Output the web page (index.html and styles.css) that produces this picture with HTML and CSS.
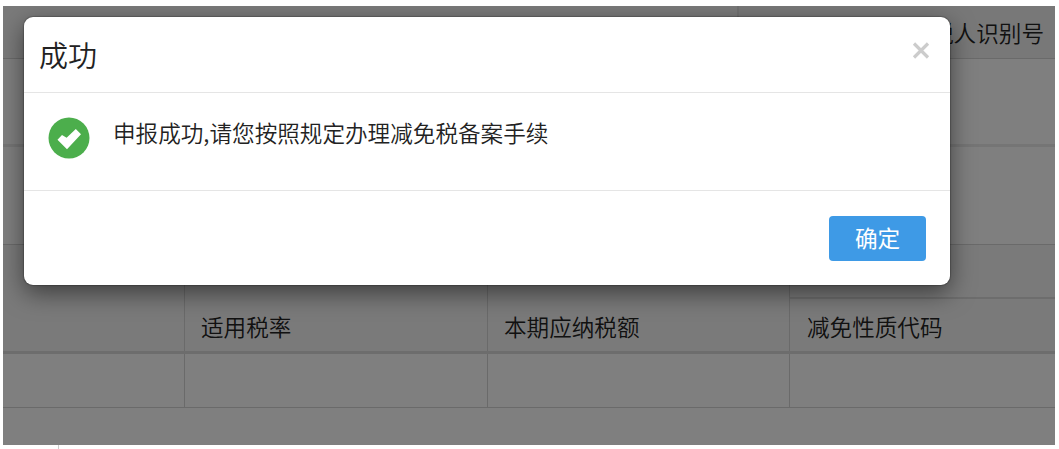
FILE: index.html
```html
<!DOCTYPE html>
<html lang="zh-CN">
<head>
    <meta charset="UTF-8">
    <meta name="viewport" content="width=device-width, initial-scale=1.0">
    <title>成功</title>
    <link rel="stylesheet" href="styles.css">
</head>
<body>
    <div class="page">
        <div class="info-row info-head">
            <div class="info-cell"></div>
            <div class="info-cell info-label">纳税人识别号</div>
        </div>
        <div class="info-row info-value"></div>
        <div class="info-row info-extra"></div>

        <div class="tax-head">
            <div class="tax-cell"></div>
            <div class="tax-cell">适用税率</div>
            <div class="tax-cell">本期应纳税额</div>
            <div class="tax-group">
                <div class="group-title"></div>
                <div class="group-name">减免性质代码</div>
            </div>
        </div>
        <div class="tax-row">
            <div class="tax-cell"></div>
            <div class="tax-cell"></div>
            <div class="tax-cell"></div>
            <div class="tax-cell"></div>
        </div>

        <div class="modal-backdrop">
            <div class="modal">
                <div class="modal-header">
                    <h4 class="modal-title">成功</h4>
                    <button type="button" class="close" aria-label="关闭">
                        <svg width="18" height="18" viewBox="0 0 18 18">
                            <path d="M2 2.5L16 16.5M16 2.5L2 16.5" stroke="#cccccc" stroke-width="3.2" fill="none"/>
                        </svg>
                    </button>
                </div>
                <div class="modal-body">
                    <svg class="icon-ok" width="42" height="42" viewBox="0 0 42 42">
                        <circle cx="21" cy="21" r="20.5" fill="#4cae4c"/>
                        <path d="M9.5 22.7L14 18L18.6 20.8L27.8 12L33 17.2L19 32.2Z" fill="#ffffff"/>
                    </svg>
                    <p class="message">申报成功,请您按照规定办理减免税备案手续</p>
                </div>
                <div class="modal-footer">
                    <button type="button" class="btn-ok">确定</button>
                </div>
            </div>
        </div>
    </div>
    <div class="page-bottom"></div>
</body>
</html>
```

FILE: styles.css
```css
* {
    box-sizing: border-box;
}
body {
    margin: 0;
    padding: 6px 4px 0 3px;
    background-color: #ffffff;
    color: #222222;
    font-family: "Noto Sans CJK SC", sans-serif;
    font-size: 22.6px;
    font-weight: 350;
    line-height: 30px;
    overflow: hidden;
}
.page {
    position: relative;
    height: 439px;
    overflow: hidden;
}
.info-row {
    border-bottom: 1px solid #d5d5d5;
}
.info-head {
    display: grid;
    grid-template-columns: 734px 1fr;
    height: 53px;
    background-color: #f5f5f5;
}
.info-label {
    padding: 12px 11px 0 0;
    border-left: 2px solid #e2e2e2;
    background-color: #f0f0f0;
    text-align: right;
}
.info-value {
    height: 88px;
    border-bottom: 3px solid #eaeaea;
}
.info-extra {
    height: 98px;
}
.tax-head,
.tax-row {
    display: grid;
    grid-template-columns: 181px 303px 302px 1fr;
}
.tax-head {
    height: 109px;
    background-color: #f5f5f5;
    border-bottom: 3px solid #dadada;
}
.tax-cell {
    padding-left: 16px;
    border-left: 1px solid #d5d5d5;
}
.tax-cell:first-child {
    border-left: none;
}
.tax-head .tax-cell {
    padding-top: 67px;
}
.tax-row {
    height: 54px;
    border-bottom: 1px solid #d5d5d5;
}
.tax-group {
    border-left: 1px solid #d5d5d5;
}
.group-title {
    height: 54px;
    border-bottom: 2px solid #dadada;
}
.group-name {
    padding: 13px 0 0 17px;
}
.modal-backdrop {
    position: absolute;
    inset: 0;
    padding: 11px 21px;
    background-color: rgba(0, 0, 0, 0.5);
}
.modal {
    width: 926px;
    height: 268px;
    background-color: #ffffff;
    border-radius: 9px;
    box-shadow: 0 8px 24px rgba(0, 0, 0, 0.5), 0 0 1px 1px rgba(0, 0, 0, 0.2);
}
.modal-header {
    display: flex;
    justify-content: space-between;
    height: 76px;
    padding: 18px 20px 0 15px;
    border-bottom: 1px solid #e5e5e5;
}
.modal-title {
    margin: 0;
    font-size: 29px;
    font-weight: 350;
    line-height: 38px;
}
.close {
    height: 18px;
    margin-top: 6px;
    padding: 0;
    border: none;
    background: none;
    cursor: pointer;
}
.close svg,
.icon-ok {
    display: block;
}
.modal-body {
    display: flex;
    gap: 23px;
    height: 97px;
    padding: 24px 24px 0;
}
.message {
    margin: 0;
    padding-top: 1px;
}
.modal-footer {
    display: flex;
    justify-content: flex-end;
    height: 95px;
    padding: 25px 24px 0;
    border-top: 1px solid #e5e5e5;
}
.btn-ok {
    width: 97px;
    height: 45px;
    padding: 0 0 2px;
    border: none;
    border-radius: 4px;
    background-color: #3e9ae6;
    color: #ffffff;
    font-family: inherit;
    font-size: 22.6px;
    cursor: pointer;
}
.page-bottom {
    width: 1px;
    height: 4px;
    margin-left: 55px;
    background-color: #cccccc;
}
```
